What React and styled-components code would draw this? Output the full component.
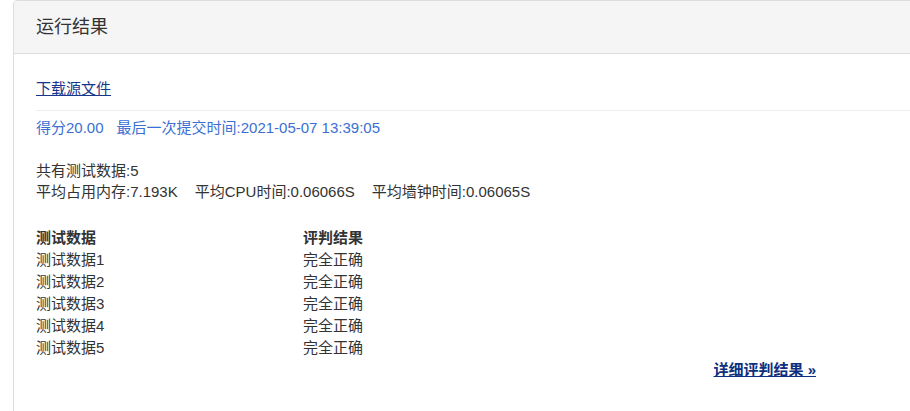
import React from "react";
import styled, { createGlobalStyle } from "styled-components";

const Global = createGlobalStyle`
  html, body { margin: 0; padding: 0; background: #fff; }
  body {
    font-family: "Liberation Sans", Arial, "Noto Sans CJK SC", sans-serif;
    font-size: 15px;
    line-height: 21px;
    color: #333;
  }
`;

const Panel = styled.div`
  margin-left: 13px;
  width: 920px;
  border: 1px solid #ddd;
  border-radius: 4px 0 0 0;
  background: #fff;
  min-height: 430px;
  box-sizing: border-box;
`;

const Heading = styled.div`
  height: 52px;
  background: #f5f5f5;
  border-bottom: 1px solid #ddd;
  border-radius: 4px 0 0 0;
  display: flex;
  align-items: center;
  padding-left: 22px;
`;

const Title = styled.h3`
  margin: 0;
  font-size: 18px;
  font-weight: normal;
  color: #333;
  line-height: 22px;
`;

const Body = styled.div`
  padding: 24px 0 0 22px;
`;

const Link = styled.a`
  color: ${(p) => (p.$strong ? "#0d2f7e" : "#16378c")};
  font-weight: ${(p) => (p.$strong ? "bold" : "normal")};
  text-decoration: underline;
  cursor: pointer;
`;

const Rule = styled.hr`
  margin: 11px 0 6px 0;
  border: 0;
  border-top: 1px solid #eee;
`;

const Score = styled.div`
  color: #3b6fd4;
`;

const Stats = styled.div`
  margin-top: 22px;
`;

const Gap = styled.span`
  display: inline-block;
  width: ${(p) => p.$w}px;
`;

const Table = styled.div`
  margin-top: 24px;
  display: grid;
  grid-template-columns: 267px auto;
  grid-auto-rows: 22px;
  align-items: center;
`;

const HeadCell = styled.div`
  font-weight: bold;
`;

const Cell = styled.div``;

const Footer = styled.div`
  width: 780px;
  display: flex;
  justify-content: flex-end;
  margin-top: 1px;
`;

const rows = [1, 2, 3, 4, 5];

export default function App() {
  return (
    <>
      <Global />
      <Panel>
        <Heading>
          <Title>运行结果</Title>
        </Heading>
        <Body>
          <Link>下载源文件</Link>
          <Rule />
          <Score>
            得分20.00<Gap $w={13} />最后一次提交时间:2021-05-07 13:39:05
          </Score>
          <Stats>
            <div>共有测试数据:5</div>
            <div>
              平均占用内存:7.193K<Gap $w={17} />平均CPU时间:0.06066S<Gap $w={17} />平均墙钟时间:0.06065S
            </div>
          </Stats>
          <Table>
            <HeadCell>测试数据</HeadCell>
            <HeadCell>评判结果</HeadCell>
            {rows.map((n) => (
              <React.Fragment key={n}>
                <Cell>测试数据{n}</Cell>
                <Cell>完全正确</Cell>
              </React.Fragment>
            ))}
          </Table>
          <Footer>
            <Link $strong>详细评判结果 »</Link>
          </Footer>
        </Body>
      </Panel>
    </>
  );
}
